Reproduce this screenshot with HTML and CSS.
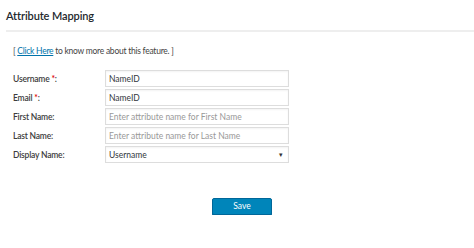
FILE: index.html
```html
<!DOCTYPE html>
<html lang="en">
<head>
    <meta charset="UTF-8">
    <title>Attribute Mapping</title>
    <link rel="stylesheet" href="styles.css">
</head>
<body>
    <div class="panel">
        <h2 class="panel-title">Attribute Mapping</h2>
        <p class="info">[ <a href="#">Click Here</a> to know more about this feature. ]</p>

        <!-- mapping fields -->
        <form class="mapping-form">
            <label>Username <span class="req">*</span>:</label>
            <input type="text" value="NameID">
            <label>Email <span class="req">*</span>:</label>
            <input type="text" value="NameID">
            <label>First Name:</label>
            <input type="text" placeholder="Enter attribute name for First Name">
            <label>Last Name:</label>
            <input type="text" placeholder="Enter attribute name for Last Name">
            <label>Display Name:</label>
            <div class="select">
                <span>Username</span>
                <span class="caret">&#9662;</span>
            </div>
        </form>

        <div class="actions">
            <button type="button" class="save-btn">Save</button>
        </div>
    </div>
</body>
</html>
```

FILE: styles.css
```css
body {
    margin: 0;
    padding: 0;
    background: #fff;
    font-family: Lato, "Open Sans", sans-serif;
    color: #23282d;
}
.panel {
    padding-left: 6px;
}
.panel-title {
    margin: 0;
    padding: 9px 0 8px;
    font-size: 11px;
    font-weight: 600;
    letter-spacing: -0.1px;
    color: #23282d;
    border-bottom: 2px solid #eeeeee;
}
.info {
    margin: 14px 0 0 7px;
    font-size: 8.5px;
    letter-spacing: -0.25px;
    color: #444;
}
.info a {
    color: #0073aa;
}
.mapping-form {
    display: grid;
    grid-template-columns: 92px 184px;
    row-gap: 2px;
    margin: 14px 0 0 7px;
    align-items: center;
}
.mapping-form label {
    font-size: 8.5px;
    font-weight: 600;
    letter-spacing: -0.2px;
    color: #3c3c3c;
}
.req {
    color: #d00;
}
.mapping-form input,
.select {
    box-sizing: border-box;
    height: 17px;
    margin: 0;
    padding: 0 3px;
    border: 1px solid #ddd;
    border-radius: 0;
    font-family: inherit;
    font-size: 8.5px;
    color: #32373c;
    box-shadow: inset 0 1px 2px rgba(0, 0, 0, 0.05);
    outline: none;
}
.mapping-form input::placeholder {
    color: #999;
}
.select {
    display: flex;
    align-items: center;
    justify-content: space-between;
}
.caret {
    font-size: 7px;
    color: #333;
    padding-right: 2px;
}
.actions {
    padding: 30px 0 0 206px;
}
.save-btn {
    width: 60px;
    height: 17px;
    border: 1px solid #006799;
    border-radius: 2px;
    background: #0085ba;
    color: #fff;
    font-family: inherit;
    font-size: 8.5px;
    box-shadow: 0 1px 0 #006799;
}
```
